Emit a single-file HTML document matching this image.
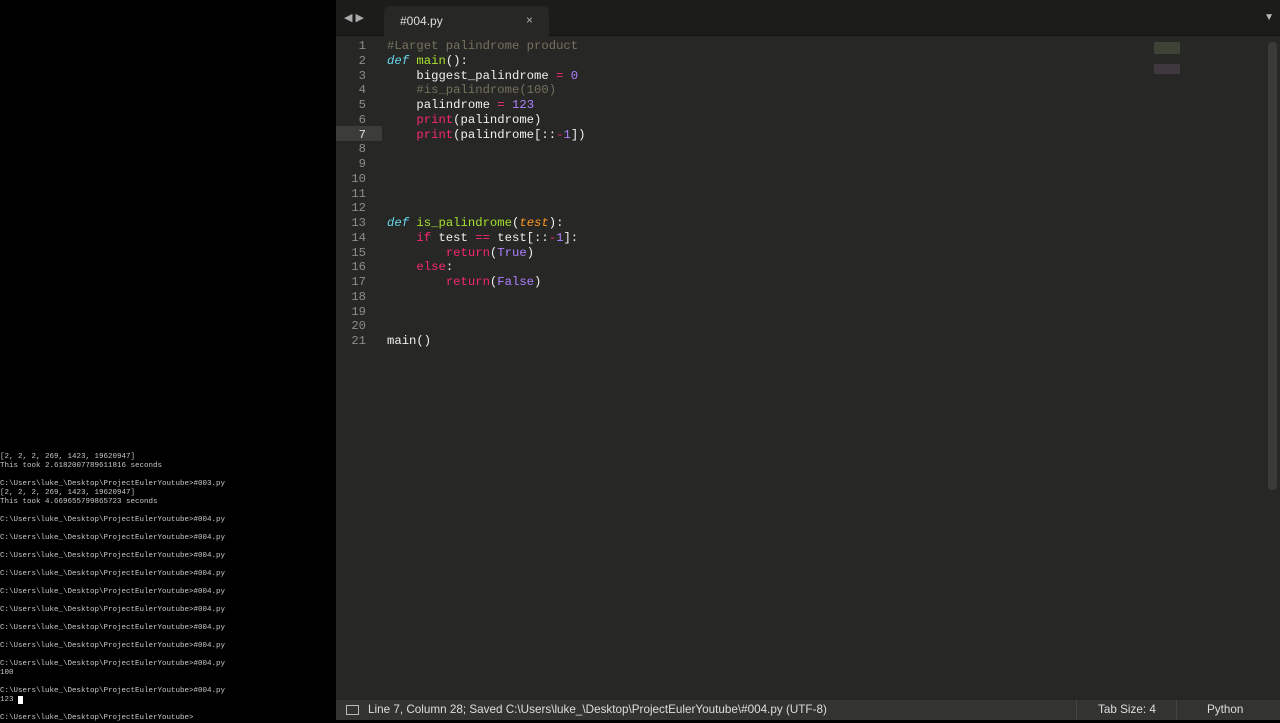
<!DOCTYPE html>
<html><head><meta charset="utf-8"><style>
*{margin:0;padding:0;box-sizing:border-box}
body{width:1280px;height:720px;overflow:hidden;background:#000;position:relative;font-family:"Liberation Sans",sans-serif}
#term{position:absolute;left:0;top:0;width:336px;height:720px;background:#000;}
#term pre{position:absolute;left:0;top:453px;font:7.5px/9px "Liberation Mono",monospace;color:#c8c8c8;white-space:pre}
#tabs{position:absolute;left:336px;top:0;width:944px;height:36px;background:#1c1c1a;border-bottom:1px solid #111}
.tab{position:absolute;left:385px;top:6px;width:165px;height:30px;background:#272725;border-radius:6px 6px 0 0}
#ed{position:absolute;left:336px;top:36px;width:944px;height:664px;background:#272725}
.ln{position:absolute;left:336px;width:30px;text-align:right;font:12.2px "Liberation Mono",monospace;color:#8c8c8c}
.cd{position:absolute;left:387px;font:12.25px "Liberation Mono",monospace;color:#f0f0f0;white-space:pre}
.c{color:#75715e}.k{color:#f92672}.d{color:#66d9ef;font-style:italic}.f{color:#a6e22e}.n{color:#ae81ff}.p{color:#fd971f;font-style:italic}
#status{position:absolute;left:336px;top:700px;width:944px;height:20px;background:#333331;color:#ddd;font-size:11.7px;line-height:20px}
</style></head><body>
<div id="term"><pre>[2, 2, 2, 269, 1423, 19620947]
This took 2.6182007789611816 seconds

C:\Users\luke_\Desktop\ProjectEulerYoutube>#003.py
[2, 2, 2, 269, 1423, 19620947]
This took 4.669655799865723 seconds

C:\Users\luke_\Desktop\ProjectEulerYoutube>#004.py

C:\Users\luke_\Desktop\ProjectEulerYoutube>#004.py

C:\Users\luke_\Desktop\ProjectEulerYoutube>#004.py

C:\Users\luke_\Desktop\ProjectEulerYoutube>#004.py

C:\Users\luke_\Desktop\ProjectEulerYoutube>#004.py

C:\Users\luke_\Desktop\ProjectEulerYoutube>#004.py

C:\Users\luke_\Desktop\ProjectEulerYoutube>#004.py

C:\Users\luke_\Desktop\ProjectEulerYoutube>#004.py

C:\Users\luke_\Desktop\ProjectEulerYoutube>#004.py
100

C:\Users\luke_\Desktop\ProjectEulerYoutube>#004.py
123 <span style="background:#fff">&nbsp;</span>

C:\Users\luke_\Desktop\ProjectEulerYoutube></pre></div>
<div id="tabs">
<div style="position:absolute;left:8px;top:11px;color:#aaa;font-size:11px">◀&nbsp;▶</div>
<div class="tab" style="left:48px"><span style="position:absolute;left:16px;top:8px;color:#ddd;font-size:12px">#004.py</span><span style="position:absolute;left:142px;top:7px;color:#aaa;font-size:12px">×</span></div>
<div style="position:absolute;right:6px;top:12px;color:#bbb;font-size:10px">▼</div>
</div>
<div id="ed">
<div style="position:absolute;left:0;top:90px;width:46px;height:15px;background:#3c3c3a"></div>
<div style="position:absolute;left:932px;top:6px;width:9px;height:448px;background:#3a3a38;border-radius:4px"></div>
<div style="position:absolute;left:818px;top:6px;width:26px;height:12px;background:#55604a;opacity:.5"></div>
<div style="position:absolute;left:818px;top:28px;width:26px;height:10px;background:#5a4a5a;opacity:.5"></div>
</div>
<div class="ln" style="top:39px">1</div><div class="ln" style="top:53.7px">2</div><div class="ln" style="top:68.5px">3</div><div class="ln" style="top:83.2px">4</div><div class="ln" style="top:98px">5</div><div class="ln" style="top:112.7px">6</div><div class="ln" style="top:127.5px;color:#ddd">7</div><div class="ln" style="top:142.2px">8</div><div class="ln" style="top:157px">9</div><div class="ln" style="top:171.7px">10</div><div class="ln" style="top:186.5px">11</div><div class="ln" style="top:201.2px">12</div><div class="ln" style="top:216px">13</div><div class="ln" style="top:230.7px">14</div><div class="ln" style="top:245.5px">15</div><div class="ln" style="top:260.2px">16</div><div class="ln" style="top:275px">17</div><div class="ln" style="top:289.7px">18</div><div class="ln" style="top:304.5px">19</div><div class="ln" style="top:319.2px">20</div><div class="ln" style="top:334px">21</div>
<div class="cd" style="top:39px;line-height:14.75px"><span class="c">#Larget palindrome product</span>
<span class="d">def</span> <span class="f">main</span>():
    biggest_palindrome <span class="k">=</span> <span class="n">0</span>
    <span class="c">#is_palindrome(100)</span>
    palindrome <span class="k">=</span> <span class="n">123</span>
    <span class="k">print</span>(palindrome)
    <span class="k">print</span>(palindrome[::<span class="k">-</span><span class="n">1</span>])





<span class="d">def</span> <span class="f">is_palindrome</span>(<span class="p">test</span>):
    <span class="k">if</span> test <span class="k">==</span> test[::<span class="k">-</span><span class="n">1</span>]:
        <span class="k">return</span>(<span class="n">True</span>)
    <span class="k">else</span>:
        <span class="k">return</span>(<span class="n">False</span>)



main()</div>
<div id="status">
<span style="position:absolute;left:10px;top:5px;width:13px;height:10px;border:1px solid #bbb"></span>
<span style="position:absolute;left:32px">Line 7, Column 28; Saved C:\Users\luke_\Desktop\ProjectEulerYoutube\#004.py (UTF-8)</span>
<span style="position:absolute;left:740px;top:0;height:20px;border-left:1px solid #444"></span>
<span style="position:absolute;left:762px">Tab Size: 4</span>
<span style="position:absolute;left:840px;top:0;height:20px;border-left:1px solid #444"></span>
<span style="position:absolute;left:871px">Python</span>
</div>
</body></html>
